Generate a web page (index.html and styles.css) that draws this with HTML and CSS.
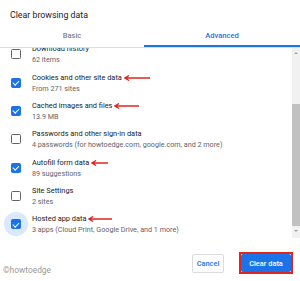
FILE: index.html
```html
<!DOCTYPE html>
<html lang="en">
<head>
  <meta charset="UTF-8">
  <title>Clear browsing data</title>
  <link rel="stylesheet" href="styles.css">
</head>
<body>
  <div class="dialog">
    <div class="title">Clear browsing data</div>
    <div class="tabs">
      <div class="tab">Basic</div>
      <div class="tab active">Advanced</div>
    </div>
    <div class="content">
      <div class="list">
        <div class="rows">
          <div class="row">
            <span class="box"></span>
            <div class="text"><div class="name">Download history</div><div class="sub">62 items</div></div>
          </div>
          <div class="row">
            <span class="box checked"></span>
            <div class="text"><div class="name">Cookies and other site data<svg class="arrow" width="26" height="6" viewBox="0 0 26 6"><path d="M26 3H2M5 0.5L1 3L5 5.5" fill="none" stroke="#e0241f" stroke-width="1.3"/></svg></div><div class="sub">From 271 sites</div></div>
          </div>
          <div class="row">
            <span class="box checked"></span>
            <div class="text"><div class="name">Cached images and files<svg class="arrow" width="25" height="6" viewBox="0 0 25 6"><path d="M25 3H2M5 0.5L1 3L5 5.5" fill="none" stroke="#e0241f" stroke-width="1.3"/></svg></div><div class="sub">13.9 MB</div></div>
          </div>
          <div class="row">
            <span class="box"></span>
            <div class="text"><div class="name">Passwords and other sign-in data</div><div class="sub">4 passwords (for howtoedge.com, google.com, and 2 more)</div></div>
          </div>
          <div class="row">
            <span class="box checked"></span>
            <div class="text"><div class="name">Autofill form data<svg class="arrow" width="17" height="6" viewBox="0 0 17 6"><path d="M17 3H2M5 0.5L1 3L5 5.5" fill="none" stroke="#e0241f" stroke-width="1.3"/></svg></div><div class="sub">89 suggestions</div></div>
          </div>
          <div class="row">
            <span class="box"></span>
            <div class="text"><div class="name">Site Settings</div><div class="sub">2 sites</div></div>
          </div>
          <div class="row">
            <span class="box checked focus"></span>
            <div class="text"><div class="name">Hosted app data<svg class="arrow" width="24" height="6" viewBox="0 0 24 6"><path d="M24 3H2M5 0.5L1 3L5 5.5" fill="none" stroke="#e0241f" stroke-width="1.3"/></svg></div><div class="sub">3 apps (Cloud Print, Google Drive, and 1 more)</div></div>
          </div>
        </div>
      </div>
      <div class="scrollbar">
        <span class="up"></span>
        <span class="thumb"></span>
        <span class="down"></span>
      </div>
    </div>
    <div class="footer">
      <span class="mark">&copy;howtoedge</span>
      <div class="buttons">
        <button class="cancel">Cancel</button>
        <span class="outline"><button class="clear">Clear data</button></span>
      </div>
    </div>
  </div>
</body>
</html>
```

FILE: styles.css
```css
body{
  margin: 0; font-family: Roboto, "Noto Sans", sans-serif;
}
.dialog{
  width: 300px; height: 281px; display: flex; flex-direction: column;
  background: #fff; overflow: hidden;
}
.title{
  height: 24px; padding: 9px 0 0 10px; box-sizing: border-box;
  font-size: 8.8px; line-height: 12px; color: #202124;
}
.tabs{
  display: grid; grid-template-columns: 144px 1fr;
  border-bottom: 1px solid #dadce0;
}
.tab{
  height: 23px; line-height: 23px; text-align: center;
  font-size: 7.6px; font-weight: 500; color: #80868b;
}
.tab.active{
  color: #1a73e8; box-shadow: inset 0 -2px 0 #1a73e8;
}
.content{
  display: flex; height: 190px;
}
.list{
  flex: 1; overflow: hidden;
}
.rows{
  margin-top: -7.7px;
}
.row{
  height: 28.33px; display: flex; align-items: center;
}
.box{
  width: 10px; height: 10px; margin: 0 11px 0 11px; box-sizing: border-box;
  border: 1.5px solid #5f6368; border-radius: 1.5px; position: relative;
}
.box.checked{
  background: #1a73e8; border-color: #1a73e8;
}
.box.checked::after{
  content: ""; position: absolute; left: 2.2px; top: 0.3px;
  width: 2.5px; height: 5px; border: solid #fff; border-width: 0 1.3px 1.3px 0;
  transform: rotate(45deg);
}
.box.focus::before{
  content: ""; position: absolute; left: -8.5px; top: -8.5px;
  width: 24px; height: 24px; border-radius: 50%;
  background: rgba(26, 115, 232, 0.16);
}
.text{
  white-space: nowrap;
}
.name{
  font-size: 7.4px; line-height: 11px; color: #202124;
}
.sub{
  font-size: 7.2px; line-height: 11px; color: #5f6368;
}
.arrow{
  margin-left: 2px; vertical-align: middle;
}
.scrollbar{
  width: 8px; background: #f1f1f1; display: flex; flex-direction: column;
  align-items: center;
}
.up, .down{
  width: 0; height: 0; border-left: 2px solid transparent; border-right: 2px solid transparent;
}
.up{
  margin-top: 4px; border-bottom: 2.5px solid #a3a3a3;
}
.down{
  margin-top: 4px; border-top: 2.5px solid #a3a3a3;
}
.thumb{
  width: 8px; height: 122px; margin-top: 50px; background: #c1c1c1;
}
.footer{
  flex: 1; display: flex; justify-content: space-between;
}
.mark{
  align-self: flex-end; margin: 0 0 6px 3px;
  font-size: 8.4px; color: #9a9a9a;
}
.buttons{
  display: flex; align-items: center; margin: 14px 7px 0 0; height: 22px;
}
button{
  font-family: inherit; font-size: 7.4px; font-weight: 500; border-radius: 2px;
  padding: 0; cursor: pointer;
}
.cancel{
  width: 32px; height: 19px; background: #fff; color: #1a73e8;
  border: 1px solid #dadce0; margin-right: 15px;
}
.outline{
  display: block; border: 2px solid #e0241f; padding: 0;
}
.clear{
  display: block; width: 50px; height: 18px; background: #1a73e8; color: #fff; border: 0;
}
```
